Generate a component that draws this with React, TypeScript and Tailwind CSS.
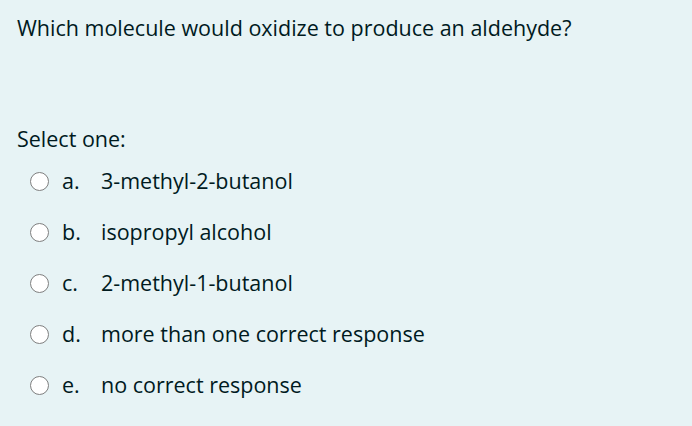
const options = [
  { letter: 'a.', text: '3-methyl-2-butanol' },
  { letter: 'b.', text: 'isopropyl alcohol' },
  { letter: 'c.', text: '2-methyl-1-butanol' },
  { letter: 'd.', text: 'more than one correct response' },
  { letter: 'e.', text: 'no correct response' },
];

export default function App() {
  return (
    <div
      className="w-[692px] h-[426px] bg-[#e7f3f5] text-[#001a1e] pl-[17px] pt-[13px] overflow-hidden"
      style={{ fontFamily: '"Open Sans", "Noto Sans", sans-serif' }}
    >
      <p className="text-[21.5px] leading-[30px]">Which molecule would oxidize to produce an aldehyde?</p>

      <div className="mt-[81px] text-[21.5px] leading-[30px]">Select one:</div>

      <div className="flex flex-col mt-[2px]">
        {options.map((o) => (
          <label key={o.letter} className="flex items-center h-[51px] text-[21.5px]">
            <span className="ml-[13px] w-[19px] h-[19px] rounded-full bg-white border-[1.5px] border-[#7f7f7f] shrink-0" />
            <span className="ml-[13px] w-[39px]">{o.letter}</span>
            <span>{o.text}</span>
          </label>
        ))}
      </div>
    </div>
  );
}
